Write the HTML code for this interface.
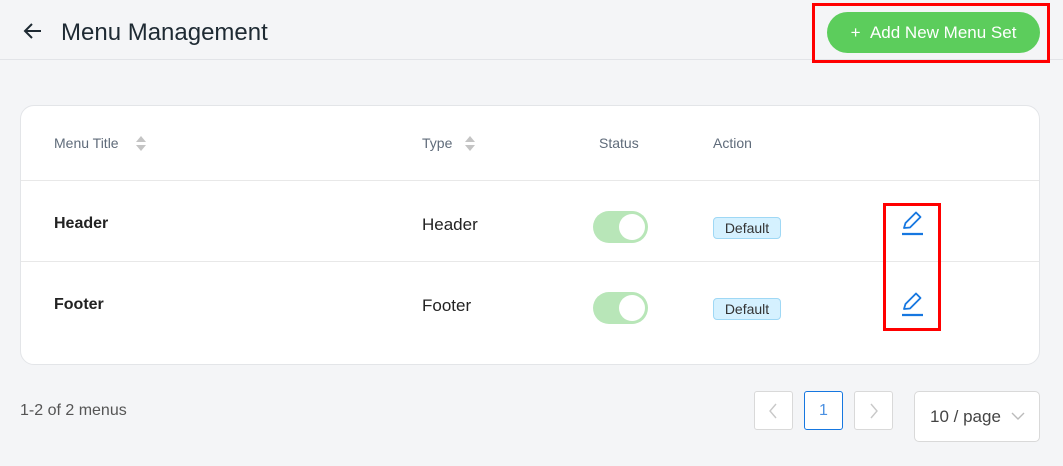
<!DOCTYPE html>
<html><head><meta charset="utf-8"><style>
*{box-sizing:border-box;margin:0;padding:0}
body{width:1063px;height:466px;background:#f4f5f7;font-family:"Liberation Sans",sans-serif;position:relative;overflow:hidden;color:#222}
.a{position:absolute}
.hdr{left:0;top:0;width:1063px;height:60px;border-bottom:1px solid #e2e4e8}
.title{left:61px;top:19px;font-size:24px;color:#1e2a33}
.btn{left:827px;top:12px;width:213px;height:41px;background:#5ccd5c;border-radius:21px;color:#fff;font-size:17px;line-height:41px;text-align:center;font-weight:500}
.red{border:3px solid #f00}
.card{left:20px;top:105px;width:1020px;height:260px;background:#fff;border:1px solid #e3e5e8;border-radius:14px}
.th{font-size:14px;color:#5f6b7a;top:135px}
.line{left:21px;width:1018px;height:1px;background:#e8e8e8}
.td{font-size:17px;color:#222}
.tog{width:55px;height:32px;border-radius:16px;background:#b8e6b8}
.tog::after{content:"";position:absolute;right:3px;top:3px;width:26px;height:26px;border-radius:50%;background:#fff}
.tag{width:68px;height:22px;background:#d5f1ff;border:1px solid #9fd8f5;border-radius:4px;font-size:14px;color:#333;text-align:center;line-height:20px}
.pg{width:39px;height:39px;border:1px solid #d9d9d9;border-radius:3px;background:#fff;text-align:center;line-height:37px;color:#c0c0c0;font-size:16px}
</style></head><body>
<div class="a hdr"></div>
<svg class="a" style="left:22px;top:21px" width="22" height="20" viewBox="0 0 22 20"><path d="M19 10H3M10 3L3 10l7 7" stroke="#1e2a33" stroke-width="2" fill="none"/></svg>
<div class="a title">Menu Management</div>
<div class="a red" style="left:812px;top:3px;width:238px;height:60px"></div>
<div class="a btn">+&nbsp;&nbsp;Add New Menu Set</div>
<div class="a card"></div>
<div class="a th" style="left:54px">Menu Title</div>
<svg class="a" style="left:135px;top:135px" width="12" height="17"><path d="M6 1l5 6H1zM6 16l5-6H1z" fill="#c4c4c4"/></svg>
<div class="a th" style="left:422px">Type</div>
<svg class="a" style="left:464px;top:135px" width="12" height="17"><path d="M6 1l5 6H1zM6 16l5-6H1z" fill="#c4c4c4"/></svg>
<div class="a th" style="left:599px">Status</div>
<div class="a th" style="left:713px">Action</div>
<div class="a line" style="top:180px"></div>
<div class="a line" style="top:261px"></div>
<div class="a td" style="left:54px;top:215px;font-weight:bold;font-size:16px">Header</div>
<div class="a td" style="left:422px;top:215px">Header</div>
<div class="a tog" style="left:593px;top:211px"></div>
<div class="a tag" style="left:713px;top:217px">Default</div>
<div class="a td" style="left:54px;top:296px;font-weight:bold;font-size:16px">Footer</div>
<div class="a td" style="left:422px;top:296px">Footer</div>
<div class="a tog" style="left:593px;top:292px"></div>
<div class="a tag" style="left:713px;top:298px">Default</div>
<div class="a red" style="left:883px;top:203px;width:58px;height:128px"></div>
<svg class="a" style="left:900px;top:210px" width="26" height="26" viewBox="0 0 26 26"><path d="M4 18l1.5-5L16 2.5l4.5 4.5L10 17.5z" stroke="#1677e0" stroke-width="1.8" fill="none" stroke-linejoin="round"/><path d="M2 24h21" stroke="#1677e0" stroke-width="2.2"/></svg>
<svg class="a" style="left:900px;top:291px" width="26" height="26" viewBox="0 0 26 26"><path d="M4 18l1.5-5L16 2.5l4.5 4.5L10 17.5z" stroke="#1677e0" stroke-width="1.8" fill="none" stroke-linejoin="round"/><path d="M2 24h21" stroke="#1677e0" stroke-width="2.2"/></svg>
<div class="a" style="left:20px;top:402px;font-size:16px;color:#555">1-2 of 2 menus</div>
<div class="a pg" style="left:754px;top:391px"></div>
<svg class="a" style="left:768px;top:403px" width="10" height="16"><path d="M8 1L2 8l6 7" stroke="#c8c8c8" stroke-width="1.4" fill="none"/></svg>
<div class="a pg" style="left:804px;top:391px;border-color:#1677e0;color:#4a90e2">1</div>
<div class="a pg" style="left:854px;top:391px"></div>
<svg class="a" style="left:869px;top:403px" width="10" height="16"><path d="M2 1l6 7-6 7" stroke="#c8c8c8" stroke-width="1.4" fill="none"/></svg>
<div class="a" style="left:914px;top:391px;width:126px;height:51px;background:#fff;border:1px solid #d9d9d9;border-radius:5px;font-size:17px;color:#444;line-height:49px;padding-left:15px">10 / page</div>
<svg class="a" style="left:1011px;top:412px" width="14" height="9"><path d="M1 1l6 6 6-6" stroke="#bbb" stroke-width="1.4" fill="none"/></svg>
</body></html>
